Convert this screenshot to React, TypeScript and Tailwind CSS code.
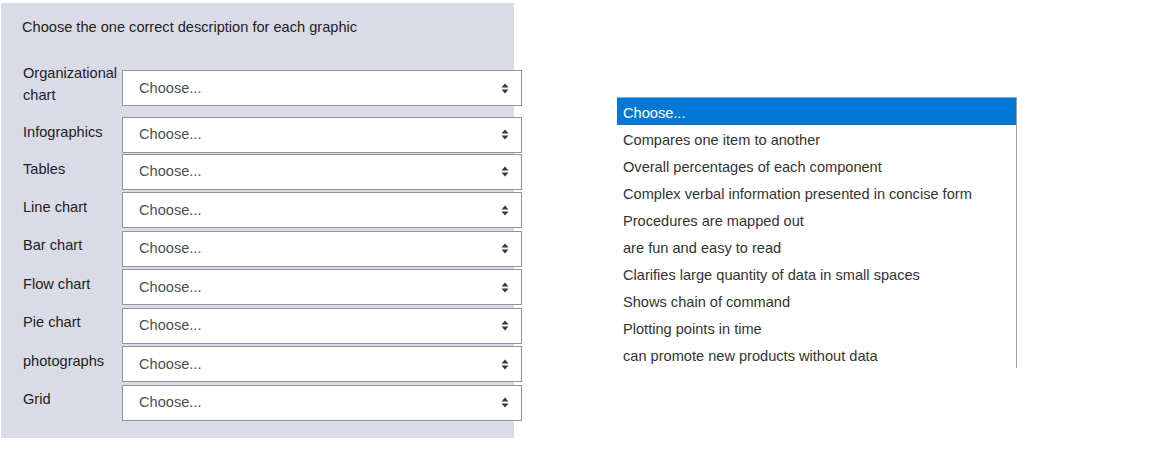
const rows = [
  { label: "Organizational chart", gap: "mt-0", pad: "pb-[8px]" },
  { label: "Infographics", gap: "mt-[2px]", pad: "pb-[4px]" },
  { label: "Tables", gap: "mt-[1px]", pad: "pb-[5px]" },
  { label: "Line chart", gap: "mt-[2.5px]", pad: "pb-[6px]" },
  { label: "Bar chart", gap: "mt-[2.5px]", pad: "pb-[6px]" },
  { label: "Flow chart", gap: "mt-[2.5px]", pad: "pb-[6px]" },
  { label: "Pie chart", gap: "mt-[2.5px]", pad: "pb-[6px]" },
  { label: "photographs", gap: "mt-[2.5px]", pad: "pb-[6px]" },
  { label: "Grid", gap: "mt-[2.5px]", pad: "pb-[6px]" },
];

const options = [
  "Choose...",
  "Compares one item to another",
  "Overall percentages of each component",
  "Complex verbal information presented in concise form",
  "Procedures are mapped out",
  "are fun and easy to read",
  "Clarifies large quantity of data in small spaces",
  "Shows chain of command",
  "Plotting points in time",
  "can promote new products without data",
];

function Arrows() {
  return (
    <svg width="8" height="11" viewBox="0 0 8 11" className="shrink-0">
      <polygon points="4,0.5 7.5,4.5 0.5,4.5" fill="#343a40" />
      <polygon points="0.5,6.5 7.5,6.5 4,10.5" fill="#343a40" />
    </svg>
  );
}

function FakeSelect() {
  return (
    <div className="flex items-center justify-between w-[400px] h-[36px] shrink-0 bg-white border border-[#8f959e] pl-[16px] pr-[12px] text-[#495057]">
      <span>Choose...</span>
      <Arrows />
    </div>
  );
}

export default function App() {
  return (
    <main className="w-[1163px] h-[467px] bg-white flex items-start font-['Liberation_Sans',Arial,sans-serif] text-[14.6px] leading-[22.5px]">
      <section className="mt-[3px] ml-[1px] w-[513px] h-[435px] shrink-0 bg-[#d9dce6] pt-[13px] pl-[21px] text-[#1d2125]">
        <div className="mb-[23px]">Choose the one correct description for each graphic</div>
        <div className="flex flex-col">
          {rows.map((r) => (
            <div key={r.label} className={`flex items-center ${r.gap}`}>
              <div className={`w-[100px] shrink-0 pl-[1px] ${r.pad}`}>{r.label}</div>
              <FakeSelect />
            </div>
          ))}
        </div>
      </section>

      <ul className="mt-[97px] ml-[103px] w-[400px] border-t border-r border-[#a0a0a0] text-[#333]">
        {options.map((o, i) => (
          <li
            key={o}
            className={
              i === 0
                ? "h-[27px] leading-[27px] pt-[2px] pl-[6px] bg-[#0078d7] text-white"
                : "h-[27px] leading-[27px] pt-[2px] pl-[6px]"
            }
          >
            {o}
          </li>
        ))}
      </ul>
    </main>
  );
}
